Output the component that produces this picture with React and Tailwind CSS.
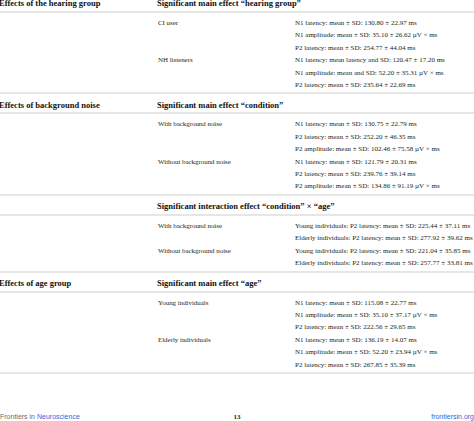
const sections = [
  {
    left: "Effects of the hearing group",
    head: "Significant main effect “hearing group”",
    groups: [
      {
        label: "CI user",
        rows: [
          "N1 latency: mean ± SD: 130.80 ± 22.97 ms",
          "N1 amplitude: mean ± SD: 35.10 ± 26.62 µV × ms",
          "P2 latency: mean ± SD: 254.77 ± 44.04 ms",
        ],
      },
      {
        label: "NH listeners",
        rows: [
          "N1 latency: mean latency and SD: 120.47 ± 17.20 ms",
          "N1 amplitude: mean and SD: 52.20 ± 35.31 µV × ms",
          "P2 latency: mean ± SD: 235.64 ± 22.69 ms",
        ],
      },
    ],
  },
  {
    left: "Effects of background noise",
    head: "Significant main effect “condition”",
    groups: [
      {
        label: "With background noise",
        rows: [
          "N1 latency: mean ± SD: 130.75 ± 22.79 ms",
          "P2 latency: mean ± SD: 252.20 ± 46.35 ms",
          "P2 amplitude: mean ± SD: 102.46 ± 75.58 µV × ms",
        ],
      },
      {
        label: "Without background noise",
        rows: [
          "N1 latency: mean ± SD: 121.79 ± 20.31 ms",
          "P2 latency: mean ± SD: 239.76 ± 39.14 ms",
          "P2 amplitude: mean ± SD: 134.86 ± 91.19 µV × ms",
        ],
      },
    ],
  },
  {
    left: "",
    head: "Significant interaction effect “condition” × “age”",
    groups: [
      {
        label: "With background noise",
        rows: [
          "Young individuals: P2 latency: mean ± SD: 225.44 ± 37.11 ms",
          "Elderly individuals: P2 latency: mean ± SD: 277.92 ± 39.62 ms",
        ],
      },
      {
        label: "Without background noise",
        rows: [
          "Young individuals: P2 latency: mean ± SD: 221.04 ± 35.85 ms",
          "Elderly individuals: P2 latency: mean ± SD: 257.77 ± 33.81 ms",
        ],
      },
    ],
  },
  {
    left: "Effects of age group",
    head: "Significant main effect “age”",
    groups: [
      {
        label: "Young individuals",
        rows: [
          "N1 latency: mean ± SD: 115.08 ± 22.77 ms",
          "N1 amplitude: mean ± SD: 35.10 ± 37.17 µV × ms",
          "P2 latency: mean ± SD: 222.56 ± 29.65 ms",
        ],
      },
      {
        label: "Elderly individuals",
        rows: [
          "N1 latency: mean ± SD: 136.19 ± 14.07 ms",
          "N1 amplitude: mean ± SD: 52.20 ± 23.94 µV × ms",
          "P2 latency: mean ± SD: 267.85 ± 35.39 ms",
        ],
      },
    ],
  },
];

const Section = ({ section }) => (
  <div>
    <div className="flex h-[20px] items-center border-b-2 border-[#e6e6e6] pt-[3px] text-[8.5px] font-bold text-[#111]">
      <div className="w-[158px] shrink-0 -ml-[1px]">{section.left}</div>
      <div className="flex-1 whitespace-nowrap">{section.head}</div>
    </div>
    <div className="border-b-2 border-[#e6e6e6] pt-[4px] pb-[1px] text-[7px] leading-[12.4px] text-[#231f20]">
      {section.groups.map((g) => (
        <div key={g.label} className="flex">
          <div className="w-[158px] shrink-0" />
          <div className="w-[137px] shrink-0 text-[6.9px]">{g.label}</div>
          <div className="flex flex-col whitespace-nowrap">
            {g.rows.map((r) => (
              <div key={r}>{r}</div>
            ))}
          </div>
        </div>
      ))}
    </div>
  </div>
);

export default function App() {
  return (
    <div
      className="h-[421px] w-[474px] overflow-hidden bg-white"
      style={{ fontFamily: '"Liberation Serif", "DejaVu Serif", serif' }}
    >
      <div className="-mt-[7px]">
        {sections.map((s) => (
          <Section key={s.head} section={s} />
        ))}
      </div>
      <div className="mt-[38px] flex items-center justify-between text-[7px] leading-[10px]">
        <div className="w-[180px] font-['Liberation_Sans',sans-serif] text-[#6b6b6b]">
          Frontiers in <span className="text-[#3b5fd9]">Neuroscience</span>
        </div>
        <div className="font-bold text-[#222]">13</div>
        <div className="w-[180px] text-right font-['Liberation_Sans',sans-serif] text-[#3b5fd9]">
          frontiersin.org
        </div>
      </div>
    </div>
  );
}
